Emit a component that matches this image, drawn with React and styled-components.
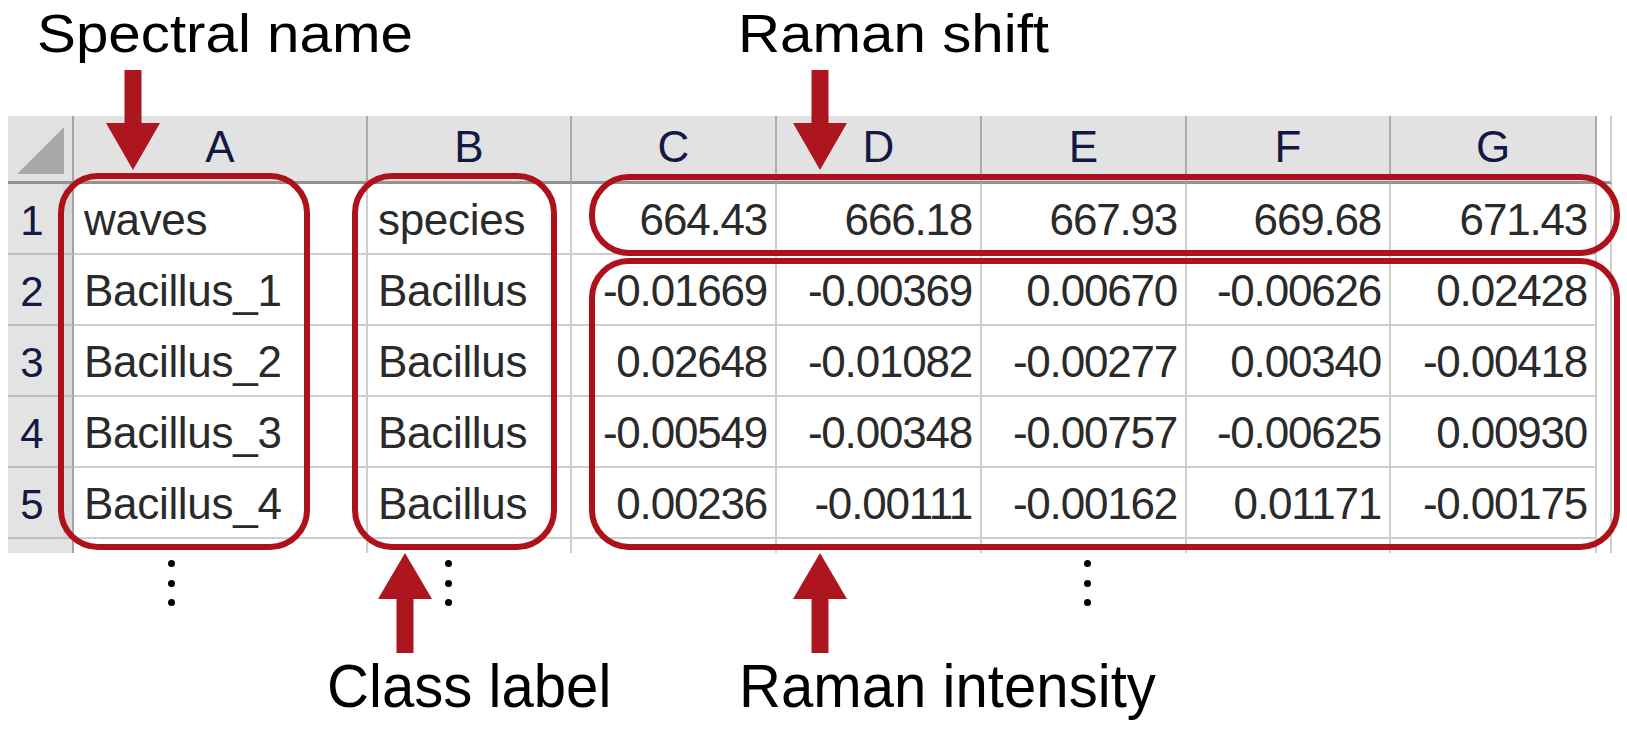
import React from "react";
import styled, { createGlobalStyle } from "styled-components";

const GlobalStyle = createGlobalStyle`
  html, body {
    margin: 0;
    padding: 0;
    background: #ffffff;
  }
  body {
    font-family: "Liberation Sans", Arial, sans-serif;
  }
`;

const RED = "#ae1119";

const columns = ["A", "B", "C", "D", "E", "F", "G"];

const rows = [
  ["waves", "species", "664.43", "666.18", "667.93", "669.68", "671.43"],
  ["Bacillus_1", "Bacillus", "-0.01669", "-0.00369", "0.00670", "-0.00626", "0.02428"],
  ["Bacillus_2", "Bacillus", "0.02648", "-0.01082", "-0.00277", "0.00340", "-0.00418"],
  ["Bacillus_3", "Bacillus", "-0.00549", "-0.00348", "-0.00757", "-0.00625", "0.00930"],
  ["Bacillus_4", "Bacillus", "0.00236", "-0.00111", "-0.00162", "0.01171", "-0.00175"],
];

// outlines drawn over the sheet: [left, top, width, height]
const outlines = [
  [58, 173, 252, 377],
  [352, 173, 205, 377],
  [589, 174, 1031, 82],
  [589, 258, 1031, 292],
];

// arrows: center x, top y, direction
const arrows = [
  { x: 133, y: 70, dir: "down" },
  { x: 820, y: 70, dir: "down" },
  { x: 405, y: 553, dir: "up" },
  { x: 820, y: 553, dir: "up" },
];

const Figure = styled.div`
  position: relative;
  width: 1627px;
  height: 731px;
  overflow: hidden;
  background: #ffffff;
`;

const TopLabels = styled.div`
  display: grid;
  grid-template-columns: 701px 1fr;
  height: 116px;
  box-sizing: border-box;
  padding: 7px 0 0 37px;
`;

const Caption = styled.div`
  font-family: "Liberation Sans", Arial, sans-serif;
  font-size: ${(p) => (p.$bottom ? 57 : 53)}px;
  line-height: ${(p) => (p.$bottom ? 57 : 53)}px;
  color: #000000;
  white-space: nowrap;
  transform-origin: left top;
  transform: ${(p) => (p.$bottom ? "scale(1.02, 1.06)" : "scaleX(1.1)")};
`;

const Sheet = styled.div`
  display: grid;
  grid-template-columns: 66px 294px 204px 205px 205px 205px 204px 206px 15px;
  grid-template-rows: 68px repeat(5, 71px) 14px;
  margin-left: 8px;
  width: 1604px;
  background: #ffffff;
`;

const Corner = styled.div`
  position: relative;
  background: #e2e2e2;
  border-right: 2px solid #a4a4a4;
  border-bottom: 3px solid #939393;

  &::after {
    content: "";
    position: absolute;
    right: 8px;
    bottom: 7px;
    width: 47px;
    height: 47px;
    background: #a9a9a9;
    clip-path: polygon(100% 0, 100% 100%, 0 100%);
  }
`;

const ColHead = styled.div`
  display: flex;
  align-items: center;
  justify-content: center;
  background: #e2e2e2;
  border-right: 2px solid #acacac;
  border-bottom: 3px solid #939393;
  font-family: "Liberation Sans", Arial, sans-serif;
  font-size: 44px;
  color: #141843;
  padding-bottom: 4px;
`;

const RowHead = styled.div`
  display: flex;
  align-items: center;
  justify-content: center;
  background: #e3e3e3;
  border-right: 2px solid #a4a4a4;
  border-bottom: 2px solid #bdbdbd;
  padding-right: 16px;
  padding-top: 4px;
  font-family: "Liberation Sans", Arial, sans-serif;
  font-size: 42px;
  color: #141843;
  box-shadow: inset -9px 0 0 #d9d9d9;
`;

const Cell = styled.div`
  display: flex;
  align-items: center;
  justify-content: ${(p) => (p.$num ? "flex-end" : "flex-start")};
  padding: ${(p) => (p.$num ? "2px 8px 0 0" : "2px 0 0 10px")};
  border-right: 2px solid #cdcdcd;
  border-bottom: 2px solid #cdcdcd;
  font-family: "Liberation Sans", Arial, sans-serif;
  font-size: 44px;
  letter-spacing: ${(p) => (p.$num ? "-1.2px" : "-0.3px")};
  color: #2a2a2a;
  white-space: nowrap;
  overflow: hidden;
`;

const Filler = styled.div`
  background: ${(p) => (p.$gray ? "#e3e3e3" : "#ffffff")};
  border-right: 2px solid ${(p) => (p.$gray ? "#a4a4a4" : "#cdcdcd")};
  border-bottom: ${(p) => (p.$head ? "3px solid #939393" : "none")};
`;

const DotsRow = styled.div`
  display: grid;
  grid-template-columns: 168px 277px 639px 7px;
  padding-top: 7px;
`;

const Ellipsis = styled.div`
  grid-column: ${(p) => p.$col};
  display: flex;
  flex-direction: column;
  gap: 12.5px;
`;

const Dot = styled.span`
  display: block;
  width: 7px;
  height: 7px;
  border-radius: 50%;
  background: #000000;
`;

const BottomLabels = styled.div`
  display: grid;
  grid-template-columns: 412px 1fr;
  padding: 50px 0 0 327px;
`;

const Outline = styled.div`
  position: absolute;
  box-sizing: border-box;
  border: 6px solid ${RED};
  border-radius: 40px;
  pointer-events: none;
`;

const ArrowMark = styled.svg`
  position: absolute;
  width: 54px;
  height: 100px;
  overflow: visible;
`;

const Arrow = ({ x, y, dir }) => (
  <ArrowMark
    viewBox="0 0 54 100"
    style={{ left: x - 27, top: y }}
  >
    {dir === "down" ? (
      <polygon points="18.5,0 35.5,0 35.5,53 54,53 27,100 0,53 18.5,53" fill="#ad161e" />
    ) : (
      <polygon points="27,0 54,46 35.5,46 35.5,100 18.5,100 18.5,46 0,46" fill="#ad161e" />
    )}
  </ArrowMark>
);

const App = () => {
  return (
    <Figure>
      <GlobalStyle />
      <TopLabels>
        <Caption>Spectral name</Caption>
        <Caption>Raman shift</Caption>
      </TopLabels>

      <Sheet>
        <Corner />
        {columns.map((c) => (
          <ColHead key={c}>{c}</ColHead>
        ))}
        <Filler $head />

        {rows.map((r, i) => (
          <React.Fragment key={i}>
            <RowHead>{i + 1}</RowHead>
            {r.map((v, j) => (
              <Cell key={j} $num={j > 1}>
                {v}
              </Cell>
            ))}
            <Filler />
          </React.Fragment>
        ))}

        <Filler $gray />
        {columns.map((c) => (
          <Filler key={c} />
        ))}
        <Filler />
      </Sheet>

      <DotsRow>
        <Ellipsis $col={2}>
          <Dot />
          <Dot />
          <Dot />
        </Ellipsis>
        <Ellipsis $col={3}>
          <Dot />
          <Dot />
          <Dot />
        </Ellipsis>
        <Ellipsis $col={4}>
          <Dot />
          <Dot />
          <Dot />
        </Ellipsis>
      </DotsRow>

      <BottomLabels>
        <Caption $bottom>Class label</Caption>
        <Caption $bottom>Raman intensity</Caption>
      </BottomLabels>

      {outlines.map(([l, t, w, h], i) => (
        <Outline key={i} style={{ left: l, top: t, width: w, height: h }} />
      ))}
      {arrows.map((a, i) => (
        <Arrow key={i} {...a} />
      ))}
    </Figure>
  );
};

export default App;
